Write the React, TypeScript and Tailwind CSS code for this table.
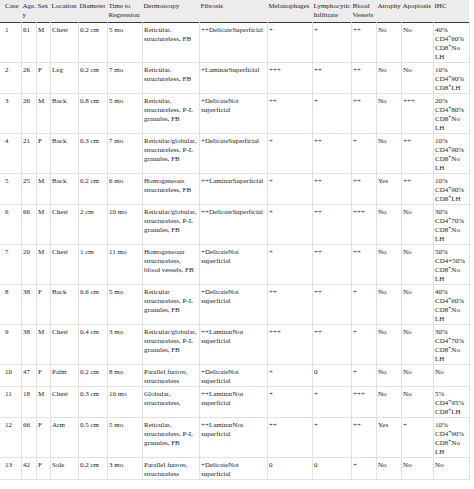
import React from "react"

type Cell = string | React.ReactNode[]

const Sup = () => <span className="relative -top-[2.5px] text-[5.5px] leading-none">+</span>

const ihc = (a: string, b: string, lh: boolean) => [
  a,
  <>CD4<Sup />{b}</>,
  lh ? <>CD8<Sup />LH</> : <>CD8<Sup />No</>,
  ...(lh ? [] : ["LH"]),
]

const headers: string[][] = [
  ["Case"],
  ["Age,", "y"],
  ["Sex"],
  ["Location"],
  ["Diameter"],
  ["Time to", "Regression"],
  ["Dermoscopy"],
  ["Fibrosis"],
  ["Melanophages"],
  ["Lymphocytic", "Infiltrate"],
  ["Blood", "Vessels"],
  ["Atrophy"],
  ["Apoptosis"],
  ["IHC"],
]

const widths = [21, 15, 14, 28, 29, 35, 57, 68, 45, 39, 25, 25, 32, 36]

const rows: Cell[][] = [
  ["1", "61", "M", "Chest", "0.2 cm", "5 mo", ["Reticular,", "structureless, FB"], "++DelicateSuperficial", "+", "+", "++", "No", "No", ihc("40%", "60%", false)],
  ["2", "26", "F", "Leg", "0.2 cm", "7 mo", ["Reticular,", "structureless, FB"], "+LaminarSuperficial", "+++", "++", "++", "No", "No", ihc("10%", "90%", true)],
  ["3", "26", "M", "Back", "0.8 cm", "5 mo", ["Reticular,", "structureless, P-L", "granules, FB"], ["+DelicateNot", "superficial"], "++", "+", "++", "No", "+++", ihc("20%", "80%", false)],
  ["4", "21", "F", "Back", "0.3 cm", "7 mo", ["Reticular/globular,", "structureless, P-L", "granules, FB"], "+DelicateSuperficial", "+", "++", "+", "No", "++", ihc("10%", "90%", false)],
  ["5", "25", "M", "Back", "0.2 cm", "6 mo", ["Homogeneous", "structureless, FB"], "++LaminarSuperficial", "+", "++", "++", "Yes", "++", ihc("10%", "90%", true)],
  ["6", "66", "M", "Chest", "2 cm", "10 mo", ["Reticular/globular,", "structureless, P-L", "granules, FB"], "++DelicateSuperficial", "+", "++", "+++", "No", "No", ihc("30%", "70%", false)],
  ["7", "20", "M", "Chest", "1 cm", "11 mo", ["Homogeneous", "structureless,", "blood vessels, FB"], ["+DelicateNot", "superficial"], "+", "++", "++", "No", "No", ["50%", "CD4+50%", <>CD8<Sup />No</>, "LH"]],
  ["8", "38", "F", "Back", "0.6 cm", "5 mo", ["Reticular", "structureless, P-L", "granules, FB"], ["+DelicateNot", "superficial"], "++", "++", "+", "No", "No", ihc("40%", "60%", false)],
  ["9", "38", "M", "Chest", "0.4 cm", "3 mo", ["Reticular/globular,", "structureless, P-L", "granules, FB"], ["++LaminarNot", "superficial"], "+++", "++", "+", "No", "No", ihc("30%", "70%", false)],
  ["10", "47", "F", "Palm", "0.2 cm", "8 mo", ["Parallel furrow,", "structureless"], ["+DelicateNot", "superficial"], "+", "0", "+", "No", "No", "No"],
  ["11", "18", "M", "Chest", "0.3 cm", "10 mo", ["Globular,", "structureless,"], ["++LaminarNot", "superficial"], "+", "+", "+++", "No", "No", ihc("5%", "95%", true)],
  ["12", "66", "F", "Arm", "0.5 cm", "5 mo", ["Reticular,", "structureless, P-L", "granules, FB"], ["++LaminarNot", "superficial"], "++", "+", "++", "Yes", "+", ihc("10%", "90%", false)],
  ["13", "42", "F", "Sole", "0.2 cm", "3 mo", ["Parallel furrow,", "structureless"], ["+DelicateNot", "superficial"], "0", "0", "+", "No", "No", "No"],
]

function Lines({ value }: { value: Cell }) {
  if (typeof value === "string") return <>{value}</>
  return (
    <>
      {value.map((line, i) => (
        <span key={i} className="block whitespace-nowrap">
          {line}
        </span>
      ))}
    </>
  )
}

export default function App() {
  return (
    <div
      className="w-[474px] h-[489px] bg-white text-[#222] overflow-hidden"
      style={{ fontFamily: '"Liberation Serif", "Times New Roman", serif' }}
    >
      <table className="table-fixed border-collapse w-[469px] text-[7px] leading-[9px]">
        <colgroup>
          {widths.map((w, i) => (
            <col key={i} style={{ width: w }} />
          ))}
        </colgroup>
        <thead>
          <tr className="bg-[#ececec] border-b-[1.5px] border-[#3a3a3a]">
            {headers.map((h, i) => (
              <th
                key={i}
                className={`font-normal text-left align-top pt-[2px] pb-[2px] pr-0 whitespace-nowrap ${i === 0 ? "pl-[5px]" : "pl-[1.5px]"}`}
              >
                {h.map((l, j) => (
                  <span key={j} className="block">
                    {l}
                  </span>
                ))}
              </th>
            ))}
          </tr>
        </thead>
        <tbody>
          {rows.map((r, ri) => (
            <tr key={ri} className="border-b border-[#e2e2e2]">
              {r.map((c, ci) => (
                <td
                  key={ci}
                  className={`align-top pt-[3px] pb-0 pr-0 whitespace-nowrap overflow-hidden border-[#e2e2e2] ${ci === 0 ? "pl-[5px]" : "pl-[1.5px] border-l"} ${ci === r.length - 1 ? "border-r" : ""}`}
                >
                  <Lines value={c} />
                </td>
              ))}
            </tr>
          ))}
        </tbody>
      </table>
    </div>
  )
}
